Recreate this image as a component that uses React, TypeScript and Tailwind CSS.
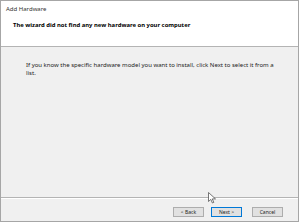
const FONT = "font-['Noto_Sans','Open_Sans',sans-serif]"

function WizardButton({ label, primary = false }: { label: string; primary?: boolean }) {
  return (
    <button
      className={`h-[10px] w-[31px] flex items-center justify-center text-[5px] leading-none text-[#222] bg-[#e1e1e1] border ${
        primary ? 'border-[#0078d7]' : 'border-[#adadad]'
      }`}
    >
      {label}
    </button>
  )
}

function Pointer() {
  // mouse cursor sitting over the footer
  return (
    <svg className="absolute left-[208px] top-[192px]" width="9" height="12" viewBox="0 0 9 12">
      <path d="M0.5 0.5 L0.5 9.5 L2.8 7.4 L4.4 11 L5.8 10.4 L4.3 6.9 L7.5 6.9 Z" fill="#fff" stroke="#555" strokeWidth="0.8" strokeLinejoin="round" />
    </svg>
  )
}

export default function App() {
  return (
    <div className={`relative w-[300px] h-[223px] bg-white ${FONT}`}>
      <div className="flex flex-col w-[299px] h-[222px] border border-[#a6a6a6]">
        {/* Header */}
        <div className="h-[46px] shrink-0 bg-white border-b border-[#b4b4b4] pt-[4px] pl-[5px]">
          <p className="text-[6px] leading-[9px] text-[#333]">Add Hardware</p>
          <p className="mt-[7px] pl-[7px] text-[5.9px] leading-[8px] font-bold text-black">
            The wizard did not find any new hardware on your computer
          </p>
        </div>

        {/* Body */}
        <div className="flex-1 bg-[#f0f0f0] pt-[14px] pl-[25px] border-b border-[#b4b4b4]">
          <p className="w-[248px] text-[6px] leading-[8px] text-[#222]">
            If you know the specific hardware model you want to install, click Next to select it from a list.
          </p>
        </div>

        {/* Footer */}
        <div className="h-[23px] shrink-0 bg-[#f0f0f0] border-t border-white flex justify-end items-start pt-[8px] pr-[15px]">
          <div className="flex gap-[7px]">
            <WizardButton label="< Back" />
            <WizardButton label="Next >" primary />
          </div>
          <div className="ml-[10px]">
            <WizardButton label="Cancel" />
          </div>
        </div>
      </div>
      <Pointer />
    </div>
  )
}
